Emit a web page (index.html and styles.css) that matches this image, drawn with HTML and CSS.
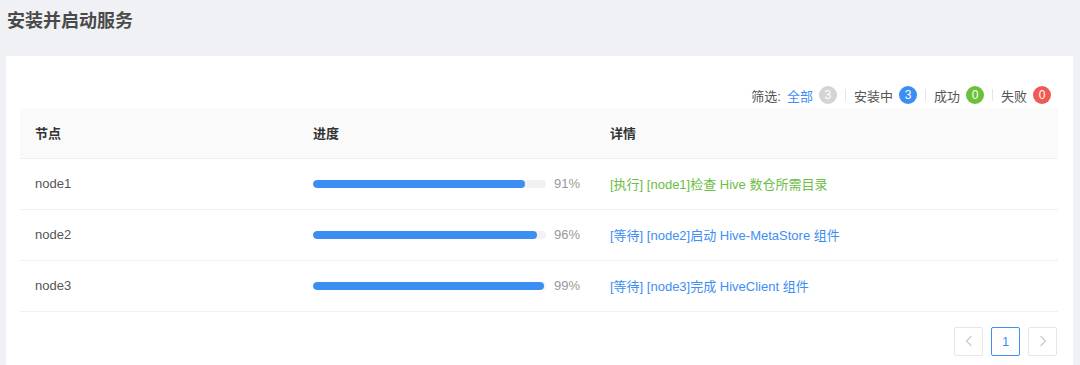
FILE: index.html
```html
<!DOCTYPE html>
<html lang="zh">
<head>
<meta charset="utf-8">
<title>安装并启动服务</title>
<link rel="stylesheet" href="styles.css">
</head>
<body>
<h1 class="page-title">安装并启动服务</h1>
<div class="card">
  <div class="filter">
    <span class="filter-label">筛选:</span>
    <span class="filter-item active">全部<span class="badge badge-gray">3</span></span>
    <span class="sep"></span>
    <span class="filter-item">安装中<span class="badge badge-blue">3</span></span>
    <span class="sep"></span>
    <span class="filter-item">成功<span class="badge badge-green">0</span></span>
    <span class="sep"></span>
    <span class="filter-item">失败<span class="badge badge-red">0</span></span>
  </div>
  <table class="table">
    <thead>
      <tr><th class="col-node">节点</th><th class="col-prog">进度</th><th>详情</th></tr>
    </thead>
    <tbody>
      <tr>
        <td>node1</td>
        <td><div class="progress"><div class="track"><div class="fill" style="width:91%"></div></div><span class="pct">91%</span></div></td>
        <td class="detail ok">[执行] [node1]检查 Hive 数仓所需目录</td>
      </tr>
      <tr>
        <td>node2</td>
        <td><div class="progress"><div class="track"><div class="fill" style="width:96%"></div></div><span class="pct">96%</span></div></td>
        <td class="detail wait">[等待] [node2]启动 Hive-MetaStore 组件</td>
      </tr>
      <tr>
        <td>node3</td>
        <td><div class="progress"><div class="track"><div class="fill" style="width:99%"></div></div><span class="pct">99%</span></div></td>
        <td class="detail wait">[等待] [node3]完成 HiveClient 组件</td>
      </tr>
    </tbody>
  </table>
  <div class="pager">
    <button class="pg-btn disabled" aria-label="上一页"><svg width="8" height="12" viewBox="0 0 8 12"><path d="M6.5 1 L1.5 6 L6.5 11" fill="none" stroke="#c8c9cc" stroke-width="1.2"/></svg></button>
    <button class="pg-btn current">1</button>
    <button class="pg-btn disabled" aria-label="下一页"><svg width="8" height="12" viewBox="0 0 8 12"><path d="M1.5 1 L6.5 6 L1.5 11" fill="none" stroke="#c8c9cc" stroke-width="1.2"/></svg></button>
  </div>
</div>
</body>
</html>
```
FILE: styles.css
```css
* { box-sizing: border-box; }
html, body {
  margin: 0;
  padding: 0;
  background: #f0f1f5;
  font-family: "Helvetica Neue", "Liberation Sans", "Noto Sans CJK SC", sans-serif;
  font-size: 13px;
  color: #555;
}
.page-title {
  margin: 0;
  padding: 9px 0 0 7px;
  height: 56px;
  font-size: 18px;
  font-weight: 700;
  line-height: 24px;
  color: #4a4a4a;
}
.card {
  margin-left: 6px;
  width: 1067px;
  background: #fff;
  padding: 29px 15px 10px 14px;
}
.filter {
  display: flex;
  align-items: center;
  justify-content: flex-end;
  height: 20px;
  margin-bottom: 3px;
  padding-right: 7px;
  color: #555;
}
.filter-label { margin-right: 6px; }
.filter-item {
  display: inline-flex;
  align-items: center;
  gap: 6px;
  color: #555;
}
.filter-item.active { color: #3f8ef2; }
.badge {
  display: inline-flex;
  align-items: center;
  justify-content: center;
  width: 18px;
  height: 18px;
  border-radius: 50%;
  color: #fff;
  font-size: 12px;
  line-height: 1;
}
.badge-gray { background: #d3d4d6; }
.badge-blue { background: #3d8ef2; }
.badge-green { background: #6cc13b; }
.badge-red { background: #ef5a55; }
.sep {
  display: inline-block;
  width: 1px;
  height: 12px;
  background: #e4e6ea;
  margin: 0 8px;
}
.table {
  width: 100%;
  border-collapse: collapse;
  table-layout: fixed;
}
.table th, .table td {
  text-align: left;
  padding: 0 15px;
  border-bottom: 1px solid #eef0f3;
}
.table th {
  height: 50px;
  background: #fafafa;
  font-weight: 600;
  color: #333;
}
.table td {
  height: 51px;
  color: #555;
}
.col-node { width: 278px; }
.col-prog { width: 297px; }
.progress {
  display: flex;
  align-items: center;
  gap: 8px;
}
.track {
  width: 234px;
  height: 8px;
  border-radius: 4px;
  background: #f2f2f2;
  overflow: hidden;
}
.fill {
  height: 100%;
  border-radius: 4px;
  background: #3d8ef2;
}
.pct { color: #999; }
.detail.ok { color: #6cbd45; }
.detail.wait { color: #3f8ef2; }
.pager {
  display: flex;
  justify-content: flex-end;
  gap: 8px;
  margin-top: 15px;
  padding-right: 1px;
}
.pg-btn {
  width: 29px;
  height: 29px;
  border: 1px solid #e4e6ea;
  border-radius: 2px;
  background: #fff;
  display: flex;
  align-items: center;
  justify-content: center;
  font: inherit;
  font-size: 13px;
  color: #3f8ef2;
  padding: 0;
}
.pg-btn.current { border-color: #3f8ef2; }
```
